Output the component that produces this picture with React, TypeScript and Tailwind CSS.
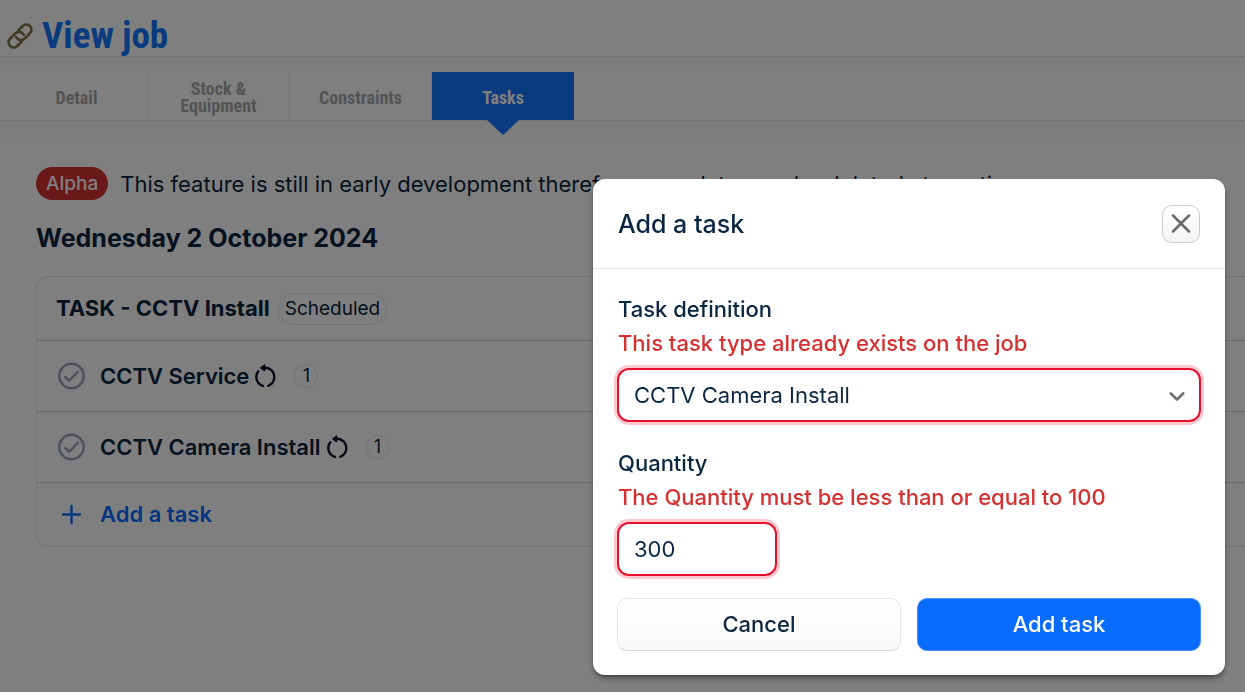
import React, { useState } from 'react';

interface Tab {
  label: string;
  active?: boolean;
}

interface Task {
  name: string;
  quantity: number;
}

const tabs: Tab[] = [
  { label: 'Detail' },
  { label: 'Stock & Equipment' },
  { label: 'Constraints' },
  { label: 'Tasks', active: true },
];

const tasks: Task[] = [
  { name: 'CCTV Service', quantity: 1 },
  { name: 'CCTV Camera Install', quantity: 1 },
];

const LinkIcon = () => (
  <svg className="w-7 h-7" viewBox="0 0 28 28" fill="none" strokeLinecap="round" strokeLinejoin="round">
    <g transform="rotate(-45 14 14)" stroke="#7d794c" strokeWidth="2.8">
      <path d="M11 19H5a5 5 0 0 1 0-10h7.8a5 5 0 0 1 4.7 6.6" />
      <path d="M17 9h6a5 5 0 0 1 0 10h-7.8a5 5 0 0 1-4.7-6.6" />
    </g>
  </svg>
);

const CheckCircleIcon = () => (
  <svg className="w-7 h-7 shrink-0" viewBox="0 0 28 28" fill="none" stroke="#9aa2b5" strokeWidth="2.4" strokeLinecap="round" strokeLinejoin="round">
    <circle cx="14.5" cy="14" r="12.2" />
    <path d="M8.3 15l3.9 3.6 8.6-8.8" />
  </svg>
);

const RepeatIcon = () => (
  <svg className="w-6 h-6 shrink-0" viewBox="0 0 24 24" fill="none" stroke="#0c1230" strokeWidth="2.4" strokeLinecap="round">
    <path d="M10 3.7h1.6a9.4 9.4 0 0 1 2.6 18.2" />
    <path d="M9 21.9A9.4 9.4 0 0 1 4.3 7.2" />
    <path d="M10.6 1v5.6L6.8 3.9z" fill="#0c1230" strokeWidth="1.4" strokeLinejoin="round" />
  </svg>
);

const PlusIcon = () => (
  <svg className="w-7 h-7 shrink-0" viewBox="0 0 28 28" fill="none" stroke="#086cff" strokeWidth="2.4" strokeLinecap="round">
    <path d="M14.5 5v17M6 13.5h17" />
  </svg>
);

const CloseIcon = () => (
  <svg className="w-5 h-5" viewBox="0 0 20 20" fill="none" stroke="#6b6b6b" strokeWidth="2.5" strokeLinecap="round">
    <path d="M2 1.5l16 16M18 1.5l-16 16" />
  </svg>
);

const ChevronIcon = () => (
  <svg className="absolute right-4 top-5 w-4 h-4 pointer-events-none" viewBox="0 0 16 16" fill="none" stroke="#6e6e6e" strokeWidth="2.6" strokeLinecap="round" strokeLinejoin="round">
    <path d="M1.8 5.5L8 11.5l6.2-6" />
  </svg>
);

const JobPage = () => (
  <div className="min-h-screen bg-white overflow-hidden">
    <header className="flex items-center gap-2 h-[57px] pl-1.5 pt-4 border-b border-gray-200">
      <LinkIcon />
      <h1 className="font-['Roboto_Condensed','Liberation_Sans_Narrow',Roboto,sans-serif] text-[37px] leading-10 font-bold text-[#1476ff]">View job</h1>
    </header>

    <nav className="flex h-16 pt-[15px] pl-1.5 border-b border-gray-200 bg-linear-to-b from-[#f5f5f5] to-white to-25% font-['Roboto_Condensed','Liberation_Sans_Narrow',Roboto,sans-serif] text-lg leading-[17px] font-bold text-center">
      {tabs.map(tab => (
        <a
          key={tab.label}
          href="#"
          className={`relative flex items-center justify-center w-[142px] px-6 pt-0.5 ${tab.active ? 'bg-[#1476ff] text-white' : 'text-[#a8a8a8] border-r border-gray-200'}`}
        >
          {tab.label}
          {tab.active && (
            <svg className="absolute top-full left-1/2 -translate-x-1/2 w-8 h-4" viewBox="0 0 32 16">
              <path d="M0 0h32L16 15z" fill="#1476ff" />
            </svg>
          )}
        </a>
      ))}
    </nav>

    <main className="pl-9 pt-[46px] bg-linear-to-b from-[#f8f8f8] to-white to-5%">
      <p className="flex items-center gap-3 whitespace-nowrap text-[22px] leading-8">
        <span className="rounded-full bg-[#d63031] px-2.5 text-[19px] leading-[33px] font-medium text-white">Alpha</span>
        This feature is still in early development therefore your data may be deleted at any time
      </p>
      <h2 className="mt-5 text-[25px] leading-9 font-bold">Wednesday 2 October 2024</h2>

      <section className="mt-5 rounded-l-xl border border-r-0 border-gray-200">
        <div className="flex items-center gap-2 h-[63px] pl-[19px]">
          <h3 className="text-[22px] font-bold">TASK - CCTV Install</h3>
          <span className="rounded-full border border-gray-200 px-1.5 text-[19px] leading-[30px]">Scheduled</span>
        </div>
        <ul>
          {tasks.map(task => (
            <li key={task.name} className="flex items-center h-[71px] pl-5 border-t border-gray-300">
              <CheckCircleIcon />
              <span className="ml-[15px] mr-[5px] text-[22px] font-semibold">{task.name}</span>
              <RepeatIcon />
              <span className="ml-4 w-6 rounded-full border border-gray-200 text-center text-lg leading-[22px]">{task.quantity}</span>
            </li>
          ))}
        </ul>
        <button className="flex items-center gap-[15px] w-full h-16 pl-5 border-t border-gray-300 text-[22px] font-semibold text-[#086cff]">
          <PlusIcon />
          Add a task
        </button>
      </section>
    </main>
  </div>
);

const fieldClass = 'block w-full h-[54px] px-[15px] rounded-xl border-2 border-[#e8112d] bg-white text-[22px] outline-none ring-3 ring-[#fbc9ce] appearance-none';

const AddTaskDialog = () => {
  const [definition, setDefinition] = useState('CCTV Camera Install');
  const [quantity, setQuantity] = useState('300');

  return (
    <div role="dialog" aria-labelledby="dialog-title" className="w-[632px] rounded-xl bg-white shadow-md shadow-black/40">
      <div className="flex items-center justify-between h-[90px] px-[25px] border-b border-gray-200">
        <h2 id="dialog-title" className="text-[25px] leading-8 font-medium">Add a task</h2>
        <button aria-label="Close" className="flex items-center justify-center w-[38px] h-[38px] rounded-[10px] border border-[#cccccc] bg-linear-to-b from-white to-[#f4f4f4]">
          <CloseIcon />
        </button>
      </div>

      <form className="px-6 pt-[23px] pb-6" onSubmit={e => e.preventDefault()}>
        <div>
          <label htmlFor="definition" className="block pl-px text-[22px] leading-[34px] font-medium">Task definition</label>
          <p className="pl-px text-[22px] leading-[34px] font-medium text-[#d63031]">This task type already exists on the job</p>
          <div className="relative mt-2">
            <select id="definition" value={definition} onChange={e => setDefinition(e.target.value)} className={fieldClass}>
              <option>CCTV Camera Install</option>
              <option>CCTV Service</option>
            </select>
            <ChevronIcon />
          </div>
        </div>

        <div className="mt-6">
          <label htmlFor="quantity" className="block pl-px text-[22px] leading-[34px] font-medium">Quantity</label>
          <p className="pl-px text-[22px] leading-[34px] font-medium text-[#d63031]">The Quantity must be less than or equal to 100</p>
          <div className="mt-2 w-40">
            <input id="quantity" type="text" value={quantity} onChange={e => setQuantity(e.target.value)} className={fieldClass} />
          </div>
        </div>

        <div className="grid grid-cols-2 gap-4 mt-[22px]">
          <button type="button" className="h-[53px] rounded-[10px] border border-gray-200 border-b-gray-300 bg-linear-to-b from-white to-[#f9f9f9] text-[22px] font-medium">Cancel</button>
          <button type="submit" className="h-[53px] rounded-[10px] border border-[#4a90f5] bg-[#086cff] text-[22px] font-medium text-white">Add task</button>
        </div>
      </form>
    </div>
  );
};

const App: React.FC = () => (
  <div className="font-[Inter,sans-serif] text-[#0a2540]">
    <JobPage />
    <div className="fixed inset-0 flex items-start justify-end pt-[179px] pr-5 bg-black/50">
      <AddTaskDialog />
    </div>
  </div>
);

export default App;
